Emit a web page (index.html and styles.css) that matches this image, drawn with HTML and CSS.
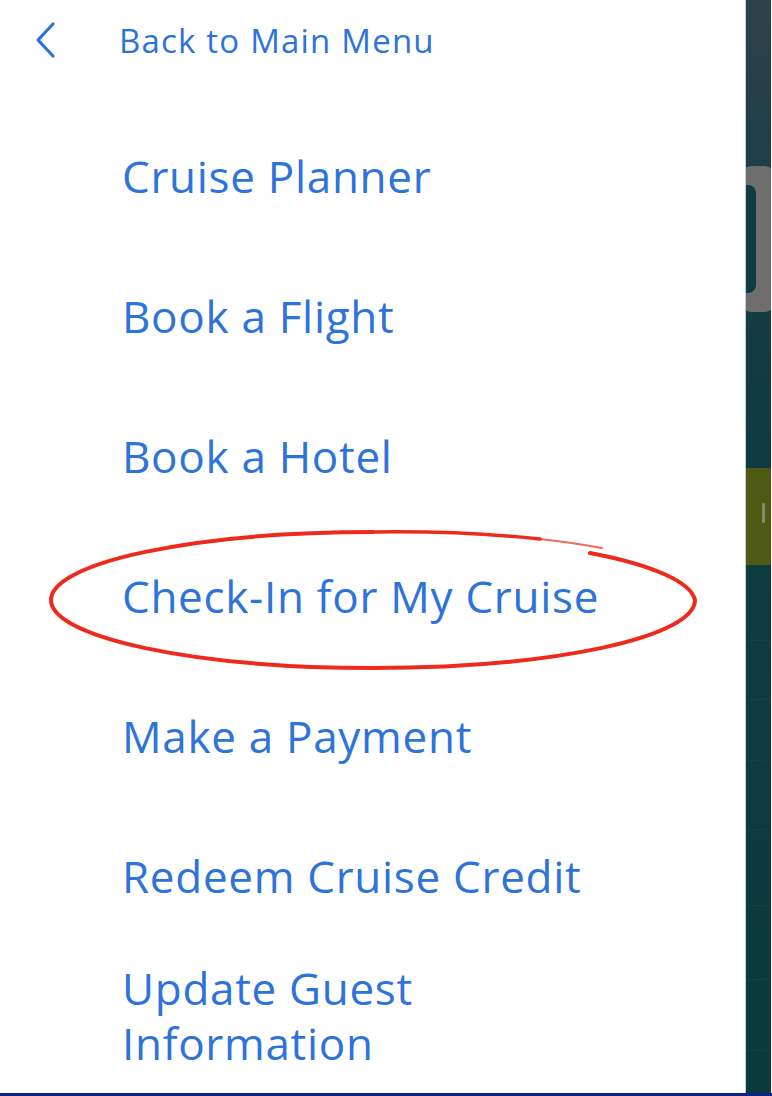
FILE: index.html
```html
<!DOCTYPE html>
<html lang="en">
<head>
    <meta charset="UTF-8">
    <meta name="viewport" content="width=device-width, initial-scale=1.0">
    <title>Manage My Cruise</title>
    <link rel="stylesheet" href="styles.css">
</head>
<body>
    <div class="screen">
        <nav class="menu-panel">
            <a class="back-link" href="#">
                <svg class="chevron" width="30" height="40" viewBox="0 0 30 40">
                    <path d="M24 4 L9 20 L24 36" fill="none" stroke="#2f72d8" stroke-width="3.2" stroke-linecap="round" stroke-linejoin="round"/>
                </svg>
                <span>Back to Main Menu</span>
            </a>

            <ul class="menu-list">
                <li><a href="#">Cruise Planner</a></li>
                <li><a href="#">Book a Flight</a></li>
                <li><a href="#">Book a Hotel</a></li>
                <li><a href="#">Check-In for My Cruise</a></li>
                <li><a href="#">Make a Payment</a></li>
                <li><a href="#">Redeem Cruise Credit</a></li>
                <li><a href="#">Update Guest<br>Information</a></li>
            </ul>

            <!-- red marker drawn over the check-in item -->
            <svg class="circle-mark" width="746" height="1093" viewBox="0 0 746 1093">
                <path d="M590 553 A322 68 0 0 1 695 600 A322 68 0 0 1 373 668 A322 68 0 0 1 51 600 A322 68 0 0 1 373 532" fill="none" stroke="#ee2a1c" stroke-width="4" stroke-linecap="round"/>
                <path d="M373 532 A322 68 0 0 1 540 539" fill="none" stroke="#ee2a1c" stroke-width="3.5" stroke-linecap="round"/>
                <path d="M540 539 A322 68 0 0 1 602 548" fill="none" stroke="#ee2a1c" stroke-width="2" stroke-linecap="round" opacity="0.7"/>
            </svg>
        </nav>

        <div class="page-behind">
            <svg width="25" height="1093" viewBox="0 0 25 1093">
                <defs>
                    <linearGradient id="sea" x1="0" y1="0" x2="0" y2="1">
                        <stop offset="0" stop-color="#2f4249"/>
                        <stop offset="0.12" stop-color="#213e46"/>
                        <stop offset="0.4" stop-color="#0e3b41"/>
                        <stop offset="1" stop-color="#0b3a3a"/>
                    </linearGradient>
                </defs>
                <rect width="25" height="1093" fill="url(#sea)"/>
                <rect x="-6" y="166" width="36" height="146" rx="12" fill="#6e6e6c"/>
                <rect x="-10" y="185" width="20" height="108" rx="8" fill="#103b41"/>
                <rect x="0" y="468" width="25" height="97" fill="#4e5a13"/>
                <rect x="16" y="503" width="3" height="20" rx="1" fill="#858a6a"/>
                <g stroke="#1c4a4c" stroke-width="1" opacity="0.6">
                    <line x1="0" y1="640" x2="25" y2="641"/>
                    <line x1="0" y1="700" x2="25" y2="699"/>
                    <line x1="0" y1="760" x2="25" y2="762"/>
                    <line x1="0" y1="830" x2="25" y2="829"/>
                    <line x1="0" y1="905" x2="25" y2="906"/>
                    <line x1="0" y1="980" x2="25" y2="979"/>
                    <line x1="0" y1="1050" x2="25" y2="1051"/>
                </g>
            </svg>
        </div>
    </div>
</body>
</html>
```

FILE: styles.css
```css
:root {
    --link: #2e73da;
    --edge: #c8cdd1;
    --footer: #0b2290;
}

* {
    box-sizing: border-box;
    font-family: 'Open Sans', 'Lato', sans-serif;
}

body {
    margin: 0;
    background: #fff;
    overflow: hidden;
}

.screen {
    display: flex;
    height: 1096px;
    border-bottom: 3px solid var(--footer);
}

.menu-panel {
    position: relative;
    width: 746px;
    flex-shrink: 0;
    background: #fff;
    border-right: 1px solid var(--edge);
}

.back-link {
    display: flex;
    align-items: center;
    height: 80px;
    padding-left: 29px;
    gap: 60px;
    color: var(--link);
    text-decoration: none;
    font-size: 33px;
    letter-spacing: 1.2px;
}

.chevron {
    flex-shrink: 0;
}

.menu-list {
    list-style: none;
    margin: 26px 0 0;
    padding: 0;
}

.menu-list li {
    display: flex;
    align-items: center;
    height: 140px;
    padding-left: 122px;
}

.menu-list a {
    color: var(--link);
    text-decoration: none;
    font-size: 44px;
    line-height: 55px;
    letter-spacing: 0.7px;
    font-variant-ligatures: none;
}

.circle-mark {
    position: absolute;
    top: 0;
    left: 0;
    pointer-events: none;
}

.page-behind {
    flex: 1;
    overflow: hidden;
}

.page-behind svg {
    display: block;
}
```
